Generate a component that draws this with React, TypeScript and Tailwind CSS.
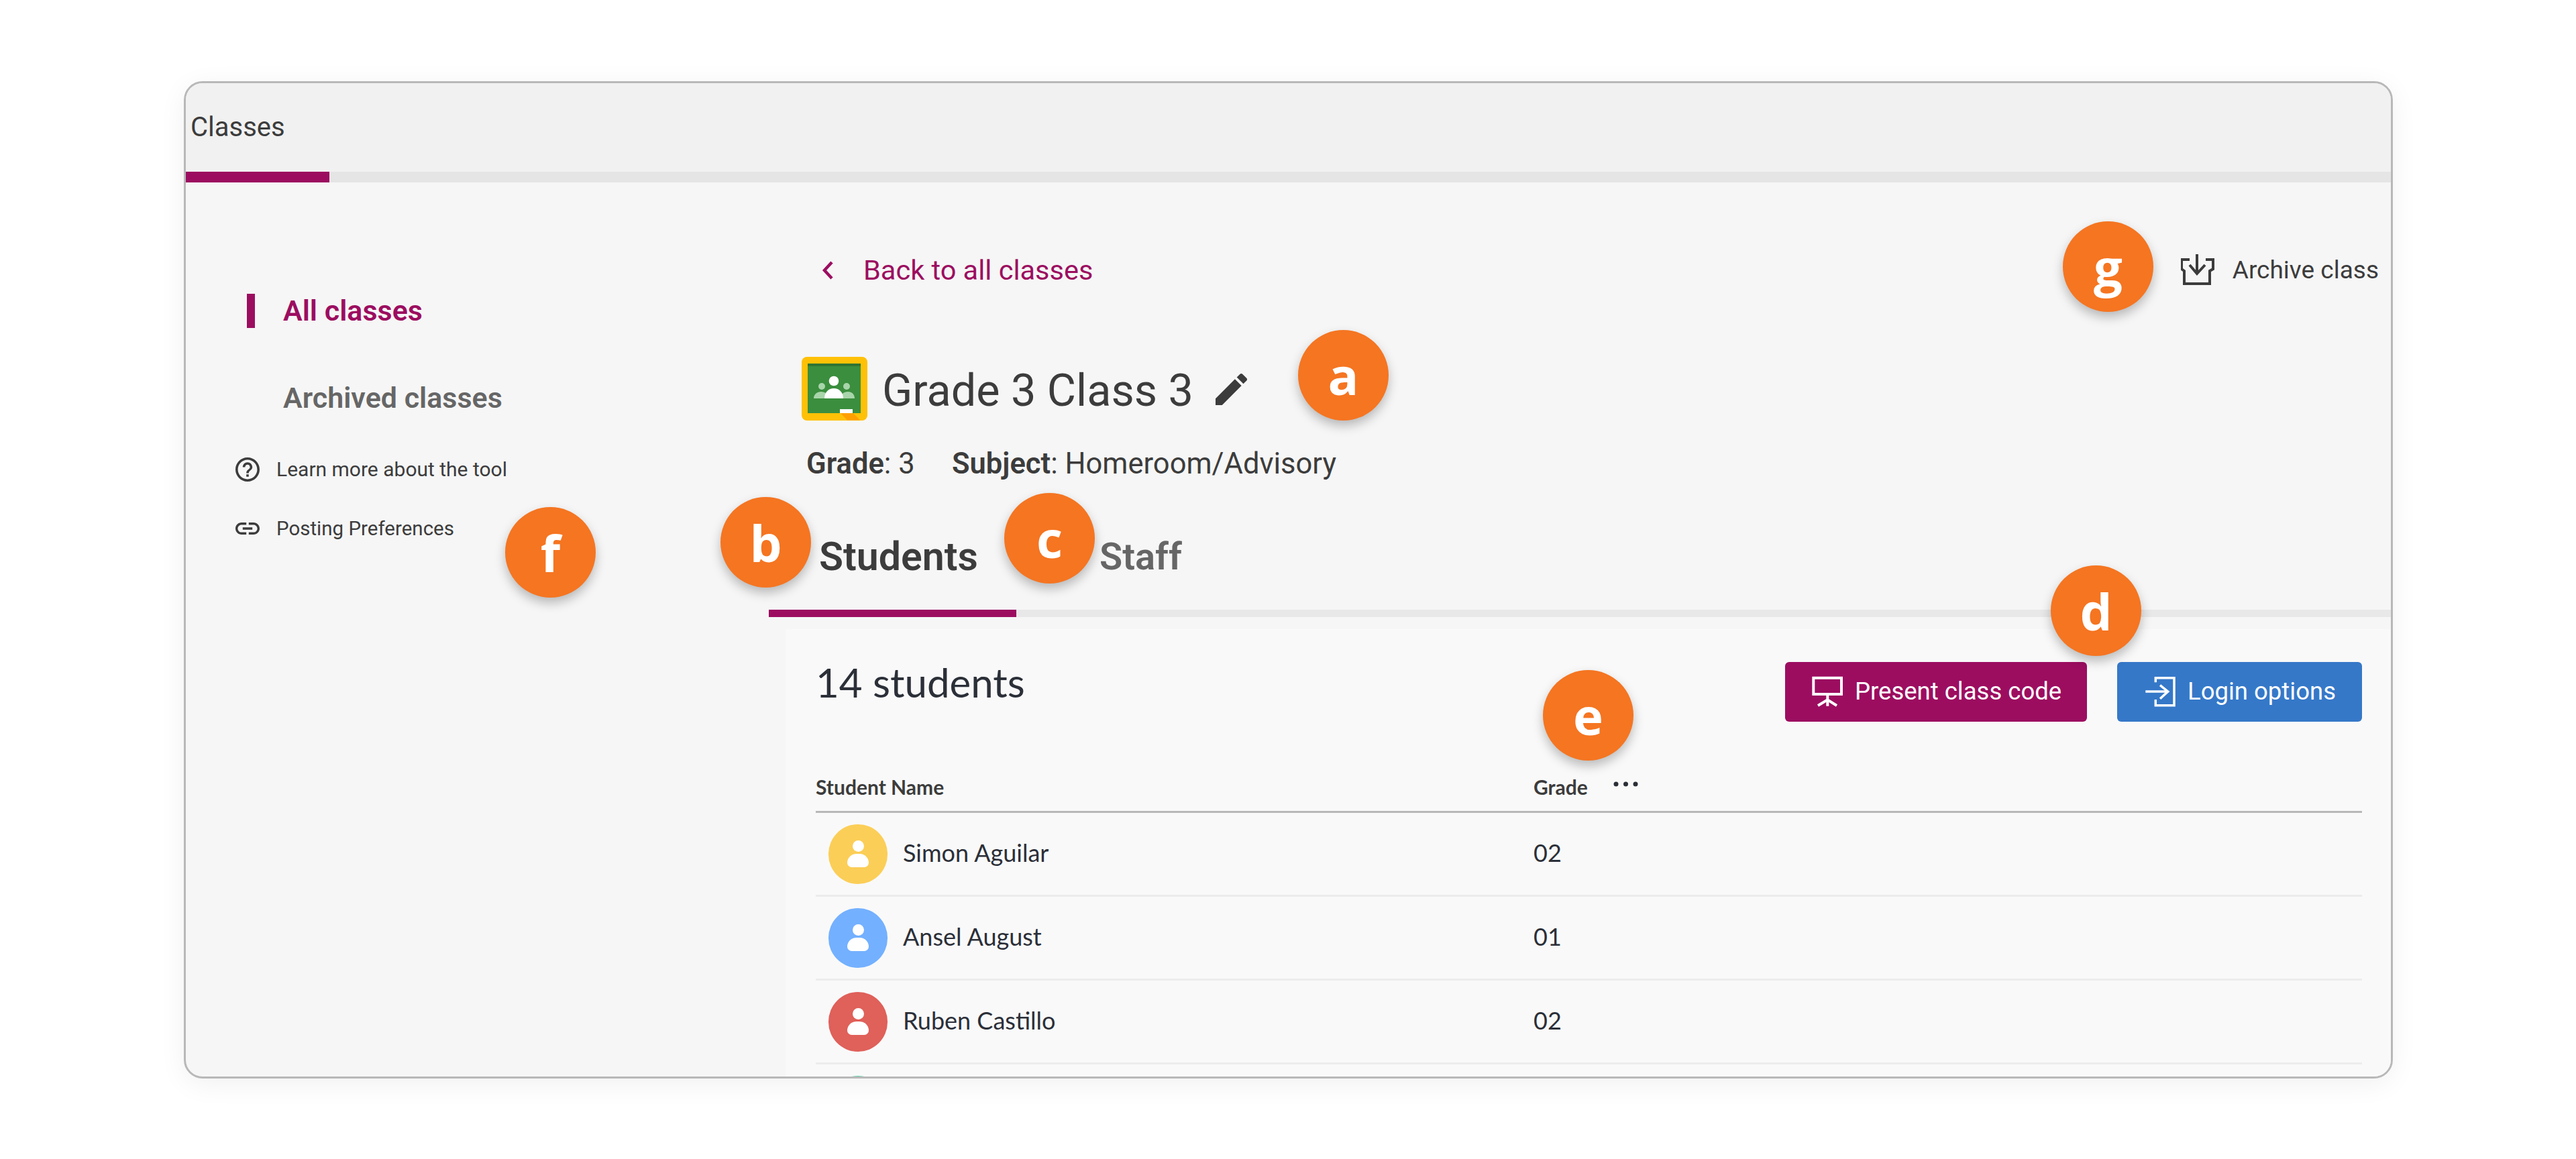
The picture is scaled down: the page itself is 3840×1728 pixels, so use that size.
import React from 'react';

const students = [
  { name: 'Simon Aguilar', grade: '02', color: 'bg-[#fbce57]' },
  { name: 'Ansel August', grade: '01', color: 'bg-[#73b0ff]' },
  { name: 'Ruben Castillo', grade: '02', color: 'bg-[#e0605a]' },
  { name: '', grade: '', color: 'bg-[#5fd4a8]' },
];

// orange annotation markers sit over the page, placed relative to the frame
const markers = [
  { label: 'a', cls: 'left-[1658px] top-[368px]' },
  { label: 'b', cls: 'left-[797px] top-[617px]' },
  { label: 'c', cls: 'left-[1220px] top-[611px]' },
  { label: 'd', cls: 'left-[2780px] top-[719px]' },
  { label: 'e', cls: 'left-[2023px] top-[875px]' },
  { label: 'f', cls: 'left-[476px] top-[632px]' },
  { label: 'g', cls: 'left-[2798px] top-[206px]' },
];

function ClassroomLogo() {
  return (
    <svg viewBox="0 0 98 96" className="h-[96px] w-[98px] shrink-0">
      <rect x="0" y="0" width="98" height="95" rx="8" fill="#ffc107" />
      <rect x="9" y="10" width="79" height="74" fill="#3b8e3e" />
      <rect x="9" y="10" width="79" height="4" fill="#2f7433" />
      <path d="M58 84h19l10 10.500H68z" fill="#ffa000" />
      <rect x="57" y="78" width="19" height="6" fill="#fff" />
      <circle cx="30" cy="44" r="5" fill="#a8d5aa" />
      <circle cx="67" cy="44" r="5" fill="#a8d5aa" />
      <path d="M18 62c0-6 5-10 11-10s11 4 11 10zM58 62c0-6 5-10 11-10s10 4 10 10z" fill="#a8d5aa" />
      <circle cx="48" cy="36" r="7.300" fill="#fff" />
      <path d="M34 62c0-9 6-15 14-15s14 6 14 15z" fill="#fff" />
    </svg>
  );
}

export default function App() {
  return (
    <div className="h-[1728px] w-[3840px] overflow-hidden bg-white pl-[274px] pt-[121px] font-['Roboto',sans-serif] text-[#3c3c3c]">
      <div className="relative flex h-[1487px] w-[3293px] flex-col overflow-hidden rounded-[28px] border-[3px] border-[#b8b8b8] bg-[#f6f6f6] shadow-[0_8px_40px_rgba(0,0,0,0.06)]">
        {/* top header */}
        <div className="flex h-[132px] shrink-0 items-center bg-[#f1f1f1] pl-[7px] text-[40px]">Classes</div>
        <div className="h-[16px] shrink-0 bg-[#e5e5e5]">
          <div className="h-[16px] w-[214px] bg-[#9c0d60]" />
        </div>

        <div className="flex min-h-0 flex-1">
          {/* side nav */}
          <div className="w-[869px] shrink-0 pl-[91px] pt-[166px]">
            <div className="flex h-[51px] items-center">
              <div className="h-[51px] w-[12px] bg-[#9c0d60]" />
              <span className="ml-[42px] text-[43px] font-semibold text-[#9c0d60]">All classes</span>
            </div>
            <div className="ml-[54px] mt-[79px] text-[43px] font-semibold leading-[50px] text-[#666666]">Archived classes</div>
            <div className="ml-[-17px] mt-[61px] flex items-center gap-[25px] text-[30px]">
              <svg viewBox="2 2 20 20" fill="#3c3c3c" className="h-[36px] w-[36px]">
                <path d="M11 18h2v-2h-2v2zm1-16C6.480 2 2 6.480 2 12s4.480 10 10 10 10-4.480 10-10S17.520 2 12 2zm0 18c-4.410 0-8-3.590-8-8s3.590-8 8-8 8 3.590 8 8-3.590 8-8 8zm0-14c-2.210 0-4 1.790-4 4h2c0-1.100.9-2 2-2s2 .9 2 2c0 2-3 1.750-3 5h2c0-2.250 3-2.500 3-5 0-2.210-1.790-4-4-4z" />
              </svg>
              <span className="leading-[42px]">Learn more about the tool</span>
            </div>
            <div className="ml-[-17px] mt-[46px] flex items-center gap-[25px] text-[29.500px]">
              <svg viewBox="2 7 20 10" fill="#3c3c3c" className="h-[18px] w-[36px]">
                <path d="M3.900 12c0-1.710 1.390-3.100 3.100-3.100h4V7H7c-2.760 0-5 2.240-5 5s2.240 5 5 5h4v-1.900H7c-1.710 0-3.100-1.390-3.100-3.100zM8 13h8v-2H8v2zm9-6h-4v1.900h4c1.710 0 3.100 1.390 3.100 3.100s-1.390 3.100-3.100 3.100h-4V17h4c2.760 0 5-2.240 5-5s-2.240-5-5-5z" />
              </svg>
              <span className="leading-[42px]">Posting Preferences</span>
            </div>
          </div>

          {/* main column */}
          <div className="flex min-w-0 flex-1 flex-col">
            <div className="flex h-[156px] shrink-0 items-end justify-between pl-[78px] pr-[18px]">
              <div className="flex h-[50px] items-center gap-[43px] text-[41.500px] text-[#9c0d60]">
                <svg viewBox="0 0 20 28" fill="none" stroke="#9c0d60" strokeWidth="4.500" className="h-[28px] w-[20px]">
                  <path d="M16 2L5 14l11 12" />
                </svg>
                Back to all classes
              </div>
              <div className="flex h-[50px] items-center gap-[27px] text-[37px]">
                <svg viewBox="10 8 50 49" fill="none" stroke="#3c3c3c" strokeWidth="4" className="h-[49px] w-[50px]">
                  <path d="M23 16H11v14l4 3v19h38V33l5-3V16H47M34 8v29M23 24l11 13 12-13" />
                </svg>
                Archive class
              </div>
            </div>
            <div className="mt-[104px] flex h-[96px] shrink-0 items-center pl-[49px]">
              <ClassroomLogo />
              <span className="ml-[22px] mt-[4px] text-[66.500px] leading-none">Grade 3 Class 3</span>
              <svg viewBox="3 3 18 18" fill="#3c3c3c" className="ml-[33px] h-[47px] w-[47px]">
                <path d="M3 17.250V21h3.750L17.810 9.940l-3.750-3.750L3 17.250zM20.710 7.040c.39-.39.39-1.020 0-1.410l-2.340-2.340c-.39-.39-1.020-.39-1.410 0l-1.830 1.830 3.750 3.750 1.830-1.830z" />
              </svg>
            </div>
            <div className="mt-[38px] flex shrink-0 pl-[56px] text-[43.500px] leading-[52px]">
              <span className="w-[217px]"><b className="font-semibold">Grade</b>: 3</span>
              <span><b className="font-semibold">Subject</b>: Homeroom/Advisory</span>
            </div>
            {/* tabs */}
            <div className="mt-[78px] flex h-[66px] shrink-0 pl-[75px] font-semibold leading-[68px]">
              <span className="w-[418px] text-[59px]">Students</span>
              <span className="text-[56px] text-[#666666]">Staff</span>
            </div>
            <div className="mt-[47px] h-[11px] shrink-0 bg-[#e8e8e8]">
              <div className="h-[11px] w-[369px] bg-[#9c0d60]" />
            </div>

            {/* students panel */}
            <div className="ml-[25px] mt-[18px] min-h-0 flex-1 overflow-hidden bg-[#f9f9f9] pl-[45px] pr-[43px] font-['Lato',sans-serif]">
              <div className="flex items-start justify-between pt-[49px]">
                <span className="mt-[-2px] text-[60px] leading-[64px] text-[#2b2f38]">14 students</span>
                <div className="flex gap-[45px] font-['Roboto',sans-serif]">
                  <button className="flex h-[89px] w-[450px] items-center gap-[15px] rounded-[6px] bg-[#9c0d60] pl-[39px] text-[36.500px] text-white">
                    <svg viewBox="10 8 50 48" fill="none" stroke="#fff" strokeWidth="4" className="h-[48px] w-[50px]">
                      <path d="M13.300 10.700H55V35H13.300zM34.300 35v17.700M20 52l14.300-8.700L48 52" />
                    </svg>
                    Present class code
                  </button>
                  <button className="flex h-[89px] w-[365px] items-center gap-[16px] rounded-[6px] bg-[#3578c8] pl-[39px] text-[36.500px] text-white">
                    <svg viewBox="10 8 50 48" fill="none" stroke="#fff" strokeWidth="3.500" className="h-[48px] w-[50px]">
                      <path d="M28.300 17.300v-6.600H56v41H28.300V43M13.300 31h33.400M35 21.700L46.700 31 35 41.700" />
                    </svg>
                    Login options
                  </button>
                </div>
              </div>
              <div className="mt-[76px] flex h-[60px] items-start border-b-[3px] border-[#b8b8b8] text-[30px] font-bold leading-[42px]">
                <span className="w-[1070px]">Student Name</span>
                <span className="w-[119px]">Grade</span>
                <svg viewBox="0 0 37 8" fill="#2b2f38" className="mt-[13px] h-[8px] w-[37px]">
                  <circle cx="4" cy="4" r="3.500" />
                  <circle cx="18.500" cy="4" r="3.500" />
                  <circle cx="33" cy="4" r="3.500" />
                </svg>
              </div>
              {students.map((s) => (
                <div key={s.name || 'next'} className="flex h-[125px] items-center border-b-[3px] border-[#ececec] text-[36px] text-[#2b2f38]">
                  <div className={`ml-[19px] flex h-[89px] w-[88px] shrink-0 flex-col items-center justify-center rounded-full ${s.color}`}>
                    <div className="h-[17px] w-[17px] rounded-full bg-white" />
                    <div className="mt-[3px] h-[20px] w-[32px] rounded-b-[8px] rounded-t-[16px] bg-white" />
                  </div>
                  <span className="mb-[4px] ml-[23px] w-[940px]">{s.name}</span>
                  <span className="mb-[4px]">{s.grade}</span>
                </div>
              ))}
            </div>
          </div>
        </div>

        {markers.map((m) => (
          <div
            key={m.label}
            className={`absolute flex h-[135px] w-[135px] items-center justify-center rounded-full bg-[#f57521] font-['Open_Sans',sans-serif] text-[76px] font-bold text-white shadow-[0_8px_16px_rgba(0,0,0,0.25)] ${m.cls}`}
          >
            {m.label}
          </div>
        ))}
      </div>
    </div>
  );
}
